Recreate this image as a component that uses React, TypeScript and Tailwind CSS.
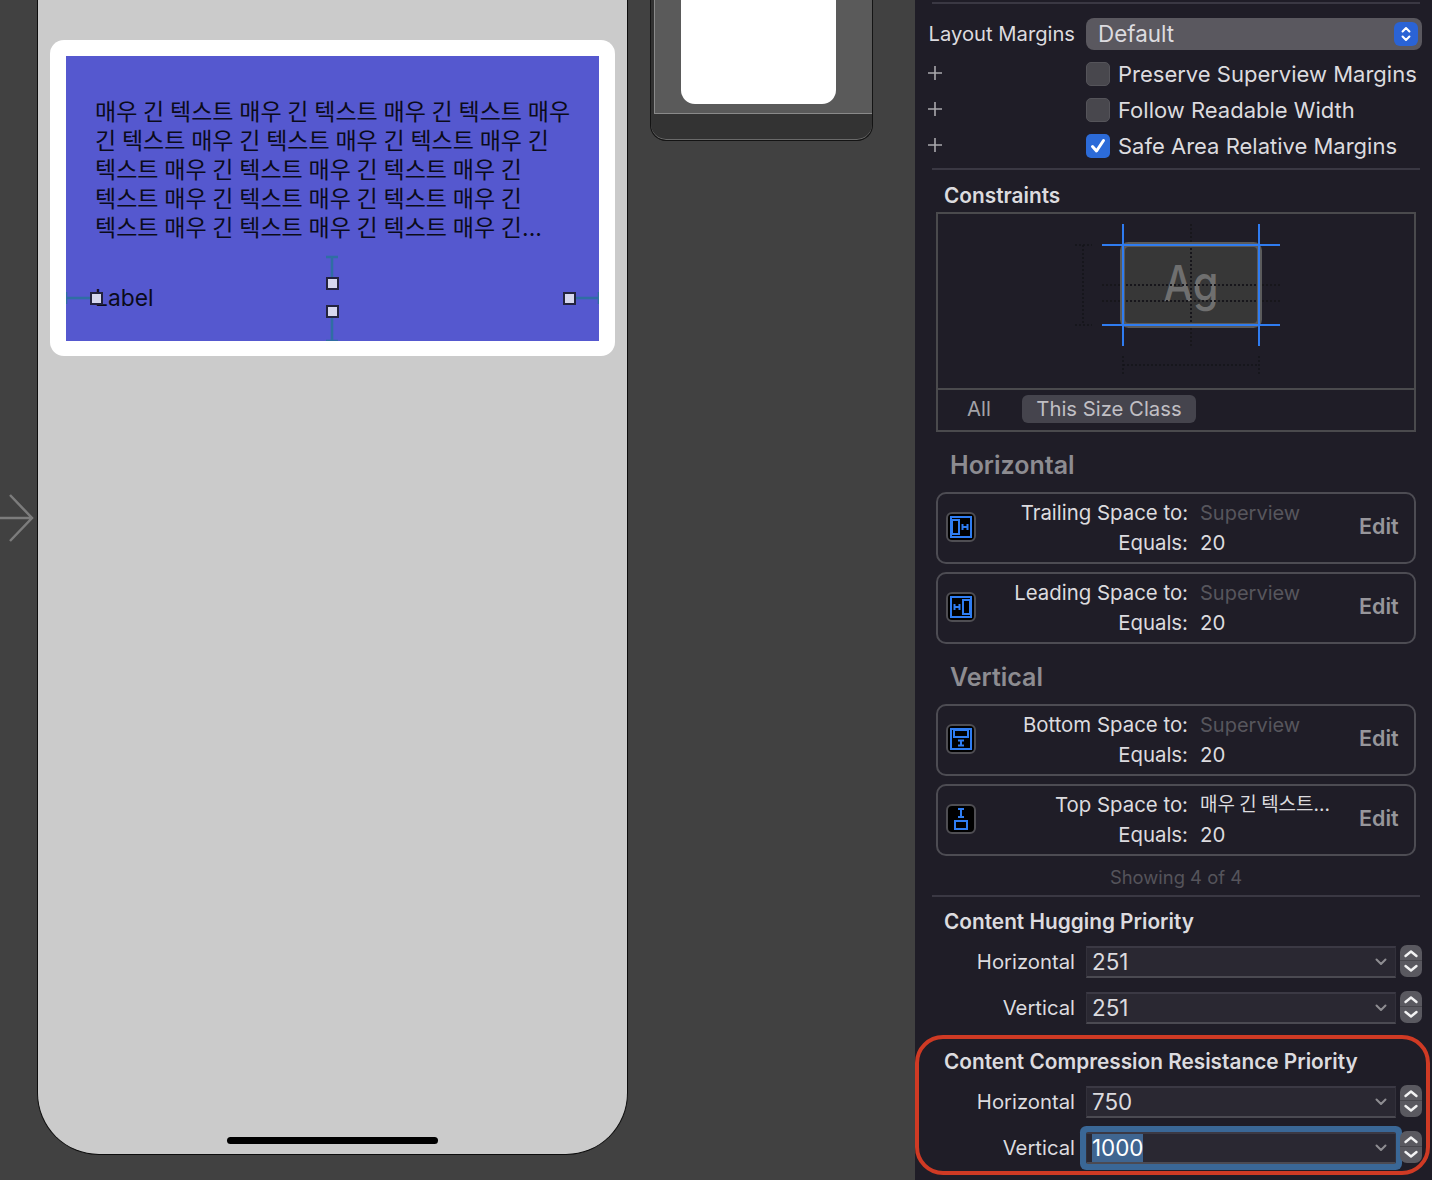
import type { ReactNode } from "react";

const longText = [
  "매우 긴 텍스트 매우 긴 텍스트 매우 긴 텍스트 매우",
  "긴 텍스트 매우 긴 텍스트 매우 긴 텍스트 매우 긴",
  "텍스트 매우 긴 텍스트 매우 긴 텍스트 매우 긴",
  "텍스트 매우 긴 텍스트 매우 긴 텍스트 매우 긴",
  "텍스트 매우 긴 텍스트 매우 긴 텍스트 매우 긴...",
];

function SelectChevrons() {
  return (
    <svg width="12" height="20" viewBox="0 0 14 22" fill="none" stroke="white" strokeWidth="2.4" strokeLinecap="round" strokeLinejoin="round">
      <path d="M3 8 L7 4 L11 8" />
      <path d="M3 14 L7 18 L11 14" />
    </svg>
  );
}

function StepperChevrons() {
  return (
    <svg width="16" height="26" viewBox="0 0 16 26" fill="none" stroke="#f2f2f3" strokeWidth="2.4" strokeLinecap="round" strokeLinejoin="round">
      <path d="M2.5 8 L8 3.5 L13.5 8" />
      <path d="M2.5 18 L8 22.5 L13.5 18" />
    </svg>
  );
}

function Divider({ className }: { className: string }) {
  return <div className={`ml-[17px] h-[2px] w-[488px] bg-[#3a3843] ${className}`} />;
}

function PlusRow({ label, checked }: { label: string; checked?: boolean }) {
  return (
    <div className="mt-3 flex h-6 items-center">
      <svg className="mb-[2px] ml-[13px]" width="14" height="14" viewBox="0 0 14 14" stroke="#a9a8ad" strokeWidth="1.6">
        <path d="M7 0 V14 M0 7 H14" />
      </svg>
      <div
        className={`ml-[144px] flex h-6 w-6 items-center justify-center rounded-[5px] ${
          checked ? "bg-[#2c6bd8]" : "border border-[#55545a] bg-[#48474d]"
        }`}
      >
        {checked && (
          <svg width="18" height="18" viewBox="0 0 18 18" fill="none" stroke="white" strokeWidth="3" strokeLinecap="round" strokeLinejoin="round">
            <path d="M3.5 9.5 L7.5 14 L14.5 3.5" />
          </svg>
        )}
      </div>
      <span className="ml-2 whitespace-nowrap text-[22px]">{label}</span>
    </div>
  );
}

function IconBox({ children }: { children: ReactNode }) {
  return (
    <svg className="mb-[2px] ml-2 shrink-0" width="30" height="30" viewBox="0 0 30 30" fill="none" stroke="#2f7df2" strokeWidth="2">
      <rect x="1" y="1" width="28" height="28" rx="5" fill="#000" stroke="#4f4e53" strokeWidth="2" />
      {children}
    </svg>
  );
}

const icons = {
  trailing: (
    <IconBox>
      <rect x="5" y="5" width="20" height="20" />
      <rect x="6" y="8" width="7" height="14" />
      <path d="M16.5 12 V18 M21.5 12 V18 M16.5 15 H21.5" />
    </IconBox>
  ),
  leading: (
    <IconBox>
      <rect x="5" y="5" width="20" height="20" />
      <rect x="17" y="8" width="7" height="14" />
      <path d="M8.5 12 V18 M13.5 12 V18 M8.5 15 H13.5" />
    </IconBox>
  ),
  bottom: (
    <IconBox>
      <rect x="5" y="5" width="20" height="20" />
      <rect x="8" y="6" width="14" height="7" />
      <path d="M12 16.5 H18 M12 21.5 H18 M15 16.5 V21.5" />
    </IconBox>
  ),
  top: (
    <IconBox>
      <path d="M12 5 H18 M12 13 H18 M15 5 V13" />
      <rect x="9" y="17" width="12" height="8" />
    </IconBox>
  ),
};

function ConstraintCard({
  icon,
  title,
  target,
  dim = true,
  className,
}: {
  icon: ReactNode;
  title: string;
  target: string;
  dim?: boolean;
  className: string;
}) {
  return (
    <div className={`ml-[21px] flex h-[72px] w-[480px] items-center rounded-[10px] border-2 border-[#4d4c53] text-[20.4px] ${className}`}>
      {icon}
      <div className="ml-3 w-[200px] text-right leading-[30px]">
        <div className="whitespace-nowrap">{title}</div>
        <div>Equals:</div>
      </div>
      <div className="ml-3 w-[146px] leading-[30px]">
        <div className={`whitespace-nowrap ${dim ? "text-[20px] text-[#57565d]" : "text-[19px] [word-spacing:-1px]"}`}>{target}</div>
        <div>20</div>
      </div>
      <div className="mb-[5px] ml-[13px] text-[21.5px] font-semibold text-[#97969b]">Edit</div>
    </div>
  );
}

function PriorityRow({ label, value, focused, className }: { label: string; value: string; focused?: boolean; className: string }) {
  return (
    <div className={`flex h-8 items-center ${className}`}>
      <div className="w-[160px] text-right text-[20.3px]">{label}</div>
      <div
        className={`ml-[11px] flex h-8 w-[310px] items-center justify-between border-x border-t-2 border-b-2 border-x-[#33313b] border-t-[#3b3944] border-b-[#4b4a52] bg-[#2a2832] pl-[5px] pr-2 text-[22.4px] ${
          focused ? "rounded-[2px] ring-[6px] ring-[#3a6796]" : ""
        }`}
      >
        <span className={focused ? "h-7 bg-[#3f6590] leading-7 text-white" : ""}>{value}</span>
        <svg width="12" height="8" viewBox="0 0 12 8" fill="none" stroke="#8e8d92" strokeWidth="2" strokeLinecap="round" strokeLinejoin="round">
          <path d="M1.5 1.5 L6 6 L10.5 1.5" />
        </svg>
      </div>
      <div className="relative -top-px ml-1 flex h-8 w-[22px] items-center justify-center rounded-[7px] bg-[#5a5960]">
        <div className="absolute inset-x-0 top-[15px] h-px bg-[#47464c]" />
        <StepperChevrons />
      </div>
    </div>
  );
}

function Heading({ children, className }: { children: ReactNode; className: string }) {
  return <div className={`ml-[29px] h-6 text-[20.8px] font-semibold leading-[26px] ${className}`}>{children}</div>;
}

function SectionTitle({ children, className }: { children: ReactNode; className: string }) {
  return <div className={`ml-[35px] h-[30px] text-[25px] font-semibold leading-[30px] text-[#8d8c91] ${className}`}>{children}</div>;
}

function Inspector() {
  return (
    <aside className="h-full w-[517px] shrink-0 overflow-hidden bg-[#1f1d27] pt-[2px] font-['Inter','Noto_Sans_CJK_KR',sans-serif] leading-6 text-[#dcdbdf]">
      <Divider className="" />
      <div className="mt-[14px] flex h-8 items-center">
        <div className="w-[160px] whitespace-nowrap text-right text-[20.2px]">Layout Margins</div>
        <div className="ml-[11px] flex h-8 w-[336px] items-center justify-between rounded-lg bg-[#5a585f] pl-3 pr-1 text-[22.4px]">
          <span>Default</span>
          <div className="flex h-6 w-6 items-center justify-center rounded-md bg-[#2a63d5]">
            <SelectChevrons />
          </div>
        </div>
      </div>
      <PlusRow label="Preserve Superview Margins" />
      <PlusRow label="Follow Readable Width" />
      <PlusRow label="Safe Area Relative Margins" checked />
      <Divider className="mt-[10px]" />

      <Heading className="mt-[13px]">Constraints</Heading>
      <div className="ml-[21px] mt-[5px] h-[220px] w-[480px] border-2 border-[#4a4a4d]">
        <svg className="block" width="476" height="174" viewBox="0 0 476 174" fill="none">
          <g stroke="#15141a" strokeWidth="1.5" strokeDasharray="2 2">
            <path d="M145 31 V111 M137 31 H154 M137 111 H154" />
            <path d="M185 151 H321 M185 142 V160 M321 142 V160" />
          </g>
          <rect x="184.5" y="30.5" width="137" height="81" rx="6" fill="#373737" stroke="#5b5b5b" strokeWidth="5" />
          <text x="253" y="87" textAnchor="middle" fontFamily="Inter, sans-serif" fontSize="49" fontWeight="500" textLength="55" lengthAdjust="spacingAndGlyphs" fill="#6f6f6f">
            Ag
          </text>
          <g stroke="#17161b" strokeWidth="2" strokeDasharray="2 2">
            <path d="M164 71 H342 M164 87 H342 M253 10 V132" />
          </g>
          <g stroke="#2f7cf0" strokeWidth="2">
            <path d="M164 31 H342 M164 111 H342 M185 10 V132 M321 10 V132" />
          </g>
        </svg>
        <div className="flex h-[42px] items-center border-t-2 border-[#4a4a4d] pb-[2px] text-[20.3px] text-[#a3a2a7]">
          <span className="ml-[29px] w-[55px]">All</span>
          <span className="flex h-7 w-[174px] items-center justify-center rounded-md bg-[#45444d] text-[#c0bfc4]">This Size Class</span>
        </div>
      </div>

      <SectionTitle className="mt-[18px]">Horizontal</SectionTitle>
      <ConstraintCard className="mt-3" icon={icons.trailing} title="Trailing Space to:" target="Superview" />
      <ConstraintCard className="mt-2" icon={icons.leading} title="Leading Space to:" target="Superview" />
      <SectionTitle className="mt-[18px]">Vertical</SectionTitle>
      <ConstraintCard className="mt-3" icon={icons.bottom} title="Bottom Space to:" target="Superview" />
      <ConstraintCard className="mt-2" icon={icons.top} title="Top Space to:" target="매우 긴 텍스트..." dim={false} />

      <div className="ml-[21px] mt-[9px] h-6 w-[480px] text-center text-[18.4px] text-[#55545b]">Showing 4 of 4</div>
      <Divider className="mt-[6px]" />

      <Heading className="mt-3">Content Hugging Priority</Heading>
      <PriorityRow className="mt-[13px]" label="Horizontal" value="251" />
      <PriorityRow className="mt-[14px]" label="Vertical" value="251" />

      <div className="relative mt-[25px]">
        <div className="pointer-events-none absolute -top-[14px] -bottom-[11px] left-0 right-[2px] rounded-[28px] border-4 border-[#cf3a24]" />
        <Heading className="">Content Compression Resistance Priority</Heading>
        <PriorityRow className="mt-[13px]" label="Horizontal" value="750" />
        <PriorityRow className="mt-[14px]" label="Vertical" value="1000" focused />
      </div>
    </aside>
  );
}

function Handle({ className }: { className: string }) {
  return <div className={`absolute h-[13px] w-[13px] border-2 border-[#23233f] bg-[#d6d7ee] ${className}`} />;
}

function Canvas() {
  return (
    <main className="relative flex h-full w-[915px] shrink-0 items-start bg-[#414141] font-['Inter','Noto_Sans_CJK_KR',sans-serif]">
      <svg className="absolute left-0 top-[494px]" width="34" height="48" viewBox="0 0 34 48" fill="none" stroke="#7c7c7c" strokeWidth="2.5">
        <path d="M0 24 H32 M10 1 L32 24 L10 47" />
      </svg>

      <div className="relative ml-[37px] h-[1155px] w-[591px] shrink-0 rounded-b-[62px] border-x border-b border-[#0d0d0d] bg-[#cbcbcb] pl-3 pt-10">
        <div className="h-[316px] w-[565px] rounded-[14px] bg-white p-4">
          <div className="relative h-[285px] w-[533px] bg-[#5558cf] pl-[29px] pt-[42px] text-[23px] leading-[29px] text-[#0b0b1a] [word-spacing:-0.7px]">
            {longText.map((line, i) => (
              <div key={i} className="whitespace-nowrap">
                {line}
              </div>
            ))}
            <div className="mt-10 whitespace-nowrap text-[22.8px]">Label</div>
            <svg className="absolute inset-0" width="533" height="285" viewBox="0 0 533 285" fill="none" stroke="#2f6ea3" strokeWidth="2.5">
              <path d="M0 242 H24 M0 236 V248 M509 242 H533 M533 236 V248 M266 201 V222 M260 201 H272 M266 261 V285 M260 285 H272" />
            </svg>
            <Handle className="left-[24px] top-[236px]" />
            <Handle className="left-[260px] top-[221px]" />
            <Handle className="left-[260px] top-[249px]" />
            <Handle className="left-[497px] top-[236px]" />
          </div>
        </div>
        <div className="absolute bottom-[10px] left-[189px] h-[7px] w-[211px] rounded-full bg-black" />
      </div>

      <div className="ml-[22px] h-[141px] w-[223px] shrink-0 overflow-hidden rounded-b-[16px] border-x border-b border-[#141414] bg-[#333333] pl-[3px] shadow-[inset_0_-1px_0_#6a6a6a]">
        <div className="h-[114px] border-b border-l border-[#8a8a8a] bg-[#5a5a5a] pl-[26px]">
          <div className="h-[104px] w-[155px] rounded-b-[14px] bg-white" />
        </div>
      </div>
    </main>
  );
}

export default function App() {
  return (
    <div className="flex h-[1180px] w-[1432px] overflow-hidden">
      <Canvas />
      <Inspector />
    </div>
  );
}
